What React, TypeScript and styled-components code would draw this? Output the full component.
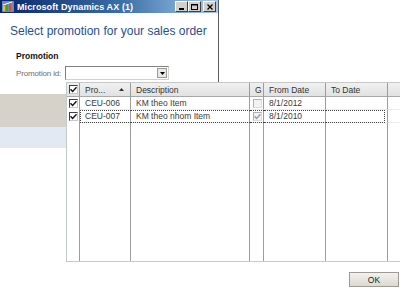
import React from "react";
import styled, { createGlobalStyle } from "styled-components";

const Global = createGlobalStyle`
  html, body { margin: 0; padding: 0; background: #ffffff; }
  body { width: 400px; height: 293px; overflow: hidden; font-family: "Liberation Sans", Arial, sans-serif; }
`;

const Page = styled.div`
  position: relative;
  width: 400px;
  height: 293px;
  background: #ffffff;
`;

const Window = styled.div`
  width: 219px;
  height: 148px;
  display: flex;
  flex-direction: column;
  border-right: 1px solid #5a5a5a;
  box-sizing: border-box;
`;

const TitleBar = styled.div`
  height: 13px;
  display: flex;
  align-items: center;
  padding: 0 2px;
  gap: 3px;
  background: linear-gradient(to right, #0a246a 0%, #3a6ea5 55%, #a6caf0 100%);
`;

const TitleText = styled.span`
  flex: 1;
  color: #ffffff;
  font-weight: bold;
  font-size: 9px;
  white-space: nowrap;
  letter-spacing: 0.1px;
`;

const Caption = styled.div`
  display: flex;
  gap: 0;
`;

const CapButton = styled.div<{ $gap?: boolean }>`
  width: 11px;
  height: 9px;
  background: #d4d0c8;
  border: 1px solid;
  border-color: #ffffff #404040 #404040 #ffffff;
  display: flex;
  align-items: center;
  justify-content: center;
  margin-left: ${(p) => (p.$gap ? "2px" : "0")};
`;

const Content = styled.div`
  height: 81px;
  background: #ffffff;
  padding: 11px 0 0 10px;
  box-sizing: border-box;
`;

const Heading = styled.div`
  color: #1e4e9c;
  font-size: 12px;
  line-height: 15px;
  white-space: nowrap;
  margin-bottom: 12px;
`;

const Group = styled.div`
  padding-left: 6px;
`;

const GroupTitle = styled.div`
  font-weight: bold;
  font-size: 8.5px;
  line-height: 10px;
  color: #111;
  margin-bottom: 5px;
`;

const FieldRow = styled.div`
  display: flex;
  align-items: center;
  gap: 4px;
`;

const Label = styled.span`
  font-size: 8px;
  letter-spacing: -0.15px;
  color: #6e6e6e;
  white-space: nowrap;
`;

const Combo = styled.div`
  width: 102px;
  height: 12px;
  border: 1px solid;
  border-color: #808080 #d0d0d0 #d0d0d0 #808080;
  display: flex;
  justify-content: flex-end;
  background: #fff;
`;

const ComboBtn = styled.div`
  width: 10px;
  height: 10px;
  margin: 1px;
  background: #ece9e4;
  border: 1px solid #9a9a9a;
  box-sizing: border-box;
  display: flex;
  align-items: center;
  justify-content: center;
`;

const GrayBand = styled.div`
  height: 33px;
  background: #d6d2ca;
`;

const BlueBand = styled.div`
  flex: 1;
  background: #e3e9f2;
`;

const Popup = styled.div`
  position: absolute;
  left: 66px;
  top: 82px;
  width: 334px;
  height: 211px;
  background: #ffffff;
  display: flex;
  flex-direction: column;
`;

const Grid = styled.div`
  height: 180px;
  display: grid;
  grid-template-columns: 13px 51px 119px 14px 62px 62px 1fr;
  grid-template-rows: 14px 13px 13px 1fr;
  border-left: 1px solid #c2cccc;
  border-bottom: 1px solid #c2cccc;
  border-top: 1px solid #c8c8c8;
  box-sizing: border-box;
`;

const HeadCell = styled.div<{ $last?: boolean; $sort?: boolean }>`
  background: linear-gradient(#f0f0f0, #e2e2e2);
  border-bottom: 1px solid #a8a8a8;
  border-right: ${(p) => (p.$last ? "none" : "1px solid #9c9c9c")};
  font-size: 8.5px;
  color: #333;
  display: flex;
  align-items: center;
  justify-content: ${(p) => (p.$sort ? "space-between" : "flex-start")};
  padding-left: 5px;
  padding-right: ${(p) => (p.$sort ? "6px" : "0")};
  white-space: nowrap;
  overflow: hidden;
  box-sizing: border-box;
`;

const CheckCell = styled.div<{ $head?: boolean }>`
  background: ${(p) => (p.$head ? "linear-gradient(#f0f0f0, #e2e2e2)" : "#fff")};
  border-bottom: ${(p) => (p.$head ? "1px solid #a8a8a8" : "none")};
  border-right: 1px solid #9c9c9c;
  display: flex;
  align-items: center;
  justify-content: center;
  box-sizing: border-box;
`;

const Cell = styled.div<{ $last?: boolean; $focus?: "l" | "m" | "r"; $narrow?: boolean }>`
  border-right: ${(p) => (p.$last ? "none" : "1px solid #9c9c9c")};
  border-bottom: 1px solid #ececec;
  font-size: 8.5px;
  color: #3a3a3a;
  display: flex;
  align-items: center;
  padding-left: ${(p) => (p.$narrow ? "3px" : "5px")};
  white-space: nowrap;
  box-sizing: border-box;
  position: relative;
  ${(p) =>
    p.$focus
      ? `&::after { content: ""; position: absolute; top: 0; bottom: -1px; left: 0; right: ${
          p.$focus === "r" ? "2px" : "-1px"
        }; border-top: 1px dotted #444; border-bottom: 1px dotted #444; ${
          p.$focus === "r" ? "border-right: 1px dotted #444;" : ""
        } ${p.$focus === "l" ? "border-left: 1px dotted #444;" : ""} pointer-events: none; }`
      : ""}
`;

const FillCell = styled.div<{ $last?: boolean }>`
  border-right: ${(p) => (p.$last ? "none" : "1px solid #9c9c9c")};
`;

const Box = styled.div<{ $disabled?: boolean }>`
  width: 9px;
  height: 9px;
  box-sizing: border-box;
  border: 1px solid;
  border-color: ${(p) =>
    p.$disabled ? "#b0b0b0 #dcdcdc #dcdcdc #b0b0b0" : "#404040 #c8c8c8 #c8c8c8 #404040"};
  background: ${(p) => (p.$disabled ? "#f2f2f2" : "#fff")};
  display: flex;
  align-items: center;
  justify-content: center;
`;

const Footer = styled.div`
  flex: 1;
  display: flex;
  justify-content: flex-end;
  align-items: flex-start;
  padding-top: 10px;
`;

const OkButton = styled.div`
  width: 50px;
  height: 15px;
  box-sizing: border-box;
  background: linear-gradient(#f2f1ee, #dcd9d2);
  border: 1px solid #9d9a93;
  font-size: 8.5px;
  color: #222;
  display: flex;
  align-items: center;
  justify-content: center;
  margin-right: 1px;
`;

const Check = ({ color = "#111" }: { color?: string }) => (
  <svg width="7" height="7" viewBox="0 0 7 7">
    <path d="M0.5 3.2 L2.6 5.4 L6.5 1.2" stroke={color} strokeWidth="1.4" fill="none" />
  </svg>
);

const AppIcon = () => (
  <svg width="12" height="11" viewBox="0 0 12 11">
    <rect x="0" y="0" width="12" height="11" fill="#6c8cc0" />
    <rect x="1" y="5" width="2" height="5" fill="#f0c020" />
    <rect x="4" y="3" width="2" height="7" fill="#40a040" />
    <rect x="7" y="1" width="2" height="9" fill="#e05020" />
    <path d="M1 4 L10 1" stroke="#fff" strokeWidth="1" />
  </svg>
);

export default function App() {
  return (
    <>
      <Global />
      <Page>
        <Window>
          <TitleBar>
            <AppIcon />
            <TitleText>Microsoft Dynamics AX (1)</TitleText>
            <Caption>
              <CapButton>
                <svg width="6" height="6" viewBox="0 0 6 6">
                  <rect x="0" y="4" width="5" height="2" fill="#000" />
                </svg>
              </CapButton>
              <CapButton>
                <svg width="7" height="6" viewBox="0 0 7 6">
                  <rect x="0.5" y="0.5" width="6" height="5" fill="none" stroke="#000" />
                  <rect x="0" y="0" width="7" height="1.5" fill="#000" />
                </svg>
              </CapButton>
              <CapButton $gap>
                <svg width="6" height="6" viewBox="0 0 6 6">
                  <path d="M0.5 0.5 L5.5 5.5 M5.5 0.5 L0.5 5.5" stroke="#000" strokeWidth="1.3" />
                </svg>
              </CapButton>
            </Caption>
          </TitleBar>
          <Content>
            <Heading>Select promotion for your sales order</Heading>
            <Group>
              <GroupTitle>Promotion</GroupTitle>
              <FieldRow>
                <Label>Promotion id:</Label>
                <Combo>
                  <ComboBtn>
                    <svg width="5" height="3" viewBox="0 0 5 3">
                      <path d="M0 0 L5 0 L2.5 3 Z" fill="#000" />
                    </svg>
                  </ComboBtn>
                </Combo>
              </FieldRow>
            </Group>
          </Content>
          <GrayBand />
          <BlueBand />
        </Window>

        <Popup>
          <Grid>
            <CheckCell $head>
              <Box>
                <Check />
              </Box>
            </CheckCell>
            <HeadCell $sort>
              <span>Pro...</span>
              <svg width="5" height="3" viewBox="0 0 5 3">
                <path d="M0 3 L5 3 L2.5 0 Z" fill="#333" />
              </svg>
            </HeadCell>
            <HeadCell>Description</HeadCell>
            <HeadCell>G</HeadCell>
            <HeadCell>From Date</HeadCell>
            <HeadCell>To Date</HeadCell>
            <HeadCell $last />

            <CheckCell>
              <Box>
                <Check />
              </Box>
            </CheckCell>
            <Cell>CEU-006</Cell>
            <Cell>KM theo Item</Cell>
            <Cell $narrow>
              <Box $disabled />
            </Cell>
            <Cell>8/1/2012</Cell>
            <Cell />
            <Cell $last />

            <CheckCell>
              <Box>
                <Check />
              </Box>
            </CheckCell>
            <Cell $focus="l">CEU-007</Cell>
            <Cell $focus="m">KM theo nhom Item</Cell>
            <Cell $focus="m" $narrow>
              <Box $disabled>
                <Check color="#9a9a9a" />
              </Box>
            </Cell>
            <Cell $focus="m">8/1/2010</Cell>
            <Cell $focus="r" />
            <Cell $last />

            <CheckCell />
            <FillCell />
            <FillCell />
            <FillCell />
            <FillCell />
            <FillCell />
            <FillCell $last />
          </Grid>
          <Footer>
            <OkButton>OK</OkButton>
          </Footer>
        </Popup>
      </Page>
    </>
  );
}
